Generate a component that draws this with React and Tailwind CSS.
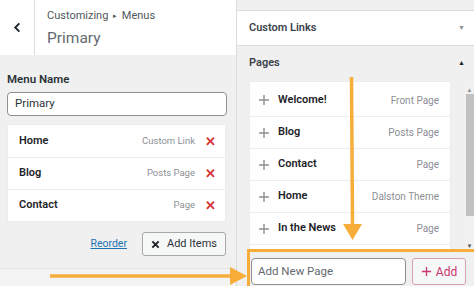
import React from "react";

const font = { fontFamily: 'Roboto, "Noto Sans", sans-serif' };

const menuItems = [
  { title: "Home", type: "Custom Link" },
  { title: "Blog", type: "Posts Page" },
  { title: "Contact", type: "Page" },
];

const pages = [
  { title: "Welcome!", type: "Front Page" },
  { title: "Blog", type: "Posts Page" },
  { title: "Contact", type: "Page" },
  { title: "Home", type: "Dalston Theme" },
  { title: "In the News", type: "Page" },
];

const Plus = ({ className }) => (
  <svg viewBox="0 0 12 12" className={className}>
    <path d="M6 1v10M1 6h10" stroke="currentColor" strokeWidth="1.4" fill="none" />
  </svg>
);

const App = () => {
  return (
    <div
      className="relative w-[474px] h-[286px] flex overflow-hidden bg-[#f0f0f1] text-[#1d2327]"
      style={font}
    >
      {/* Left: menu editor */}
      <div className="w-[237px] shrink-0 flex flex-col border-r border-[#dcdcde]">
        <div className="h-[55px] bg-white flex">
          <div className="w-[35px] border-r border-[#dcdcde] flex items-center justify-center">
            <svg viewBox="0 0 12 12" className="w-[11px] h-[11px]">
              <path d="M8 1.5L3.5 6 8 10.5" stroke="#1d2327" strokeWidth="2" fill="none" />
            </svg>
          </div>
          <div className="pl-[12px] pt-[8px]">
            <div className="text-[11px] leading-[16px] text-[#50575e]">
              Customizing <span className="text-[7px] relative -top-[1px] mx-[2px]">▸</span> Menus
            </div>
            <div className="text-[15.5px] leading-[20px] text-[#646970] mt-[3px]">Primary</div>
          </div>
        </div>

        <div className="flex-1 flex flex-col px-[7px] pt-[16px]">
          <div className="text-[11.5px] leading-[16px] font-semibold text-[#2c3338]">Menu Name</div>
          <div className="mt-[5px] h-[24px] bg-white border border-[#8c8f94] rounded-[4px] flex items-center px-[7px] text-[11.5px] text-[#2c3338] w-[220px]">
            Primary
          </div>

          <div className="mt-[8px] bg-white w-[219px] border border-[#ececec]">
            {menuItems.map((item, i) => (
              <div
                key={item.title}
                className={`h-[32px] flex items-center pl-[11px] pr-[9px] ${i > 0 ? "border-t border-[#ececec]" : ""}`}
              >
                <span className="text-[11px] font-semibold text-[#1d2327] flex-1">{item.title}</span>
                <span className="text-[9.5px] text-[#8c8f94]">{item.type}</span>
                <span className="ml-[10px] text-[#d63638] text-[13px] leading-none font-semibold">✕</span>
              </div>
            ))}
          </div>

          <div className="mt-[10px] flex items-center justify-end gap-[15px] pr-[3px]">
            <span className="text-[10.5px] text-[#2271b1] underline">Reorder</span>
            <div className="h-[24px] w-[84px] bg-[#f6f7f7] border border-[#a7aaad] rounded-[3px] flex items-center justify-center gap-[7px]">
              <svg viewBox="0 0 10 10" className="w-[9px] h-[9px]">
                <path d="M1.5 1.5l7 7M8.5 1.5l-7 7" stroke="#1d2327" strokeWidth="2.2" fill="none" />
              </svg>
              <span className="text-[11px] text-[#2c3338]">Add Items</span>
            </div>
          </div>

          <div className="mt-auto h-[18px] -mx-[7px] border-t border-[#e4e4e6] bg-[#f3f3f4]" />
        </div>
      </div>

      {/* Right: available items */}
      <div className="flex-1 flex flex-col">
        <div className="h-[10px] shrink-0" />
        <div className="h-[36px] shrink-0 bg-white border-y border-[#dcdcde] flex items-center pl-[12px] pr-[9px]">
          <span className="text-[11px] font-semibold text-[#3c434a] flex-1">Custom Links</span>
          <span className="text-[7px] text-[#8c8f94]">▼</span>
        </div>
        <div className="h-[34px] shrink-0 flex items-center pl-[12px] pr-[9px]">
          <span className="text-[11px] font-semibold text-[#3c434a] flex-1">Pages</span>
          <span className="text-[7px] text-[#1d2327]">▲</span>
        </div>

        <div className="flex h-[170px] shrink-0 overflow-hidden">
          <div className="ml-[12px] mt-[1px] w-[202px] h-[190px] bg-white border border-[#ececec]">
            {pages.map((p, i) => (
              <div
                key={p.title}
                className={`flex items-center pl-[8px] pr-[11px] ${i > 0 ? "h-[32px] border-t border-[#ececec]" : "h-[34px] pt-[2px]"}`}
              >
                <Plus className="w-[12px] h-[12px] text-[#8c8f94]" />
                <span className="ml-[8px] text-[11px] font-semibold text-[#1d2327] flex-1">{p.title}</span>
                <span className="text-[10px] text-[#8c8f94]">{p.type}</span>
              </div>
            ))}
            <div className="border-t border-[#ececec]" />
          </div>
          <div className="ml-auto w-[9px] mt-[6px] flex flex-col items-center bg-[#f1f1f1]">
            <span className="text-[6px] leading-[8px] text-[#8c8f94]">▲</span>
            <div className="w-[8px] h-[122px] bg-[#c1c1c1]" />
            <div className="flex-1" />
            <span className="text-[6px] leading-[8px] text-[#50575e]">▼</span>
          </div>
        </div>

        <div className="flex items-center gap-[6px] pl-[14px] pt-[8px]">
          <div className="w-[155px] h-[27px] bg-white border border-[#8c8f94] rounded-[4px] flex items-center px-[6px] text-[11.5px] text-[#646970]">
            Add New Page
          </div>
          <div className="w-[54px] h-[27px] bg-[#f6f7f7] border border-[#d8a0b6] rounded-[3px] flex items-center justify-center gap-[4px]">
            <Plus className="w-[11px] h-[11px] text-[#c9356e]" />
            <span className="text-[12px] text-[#c9356e]">Add</span>
          </div>
        </div>
      </div>

      {/* Annotation overlays */}
      <div className="absolute left-[247px] top-[249px] w-[230px] h-[42px] border-[3px] border-[#f6ad3a]" />
      <svg className="absolute left-0 top-0 pointer-events-none" width="474" height="286">
        <line x1="351.5" y1="77" x2="352.5" y2="226" stroke="#f6ad3a" strokeWidth="3.5" />
        <polygon points="343,224 362,224 352.5,240" fill="#f6ad3a" />
        <line x1="50" y1="276" x2="232" y2="276" stroke="#f6ad3a" strokeWidth="3.5" />
        <polygon points="230,267 230,285 247,276" fill="#f6ad3a" />
      </svg>
    </div>
  );
};

export default App;
